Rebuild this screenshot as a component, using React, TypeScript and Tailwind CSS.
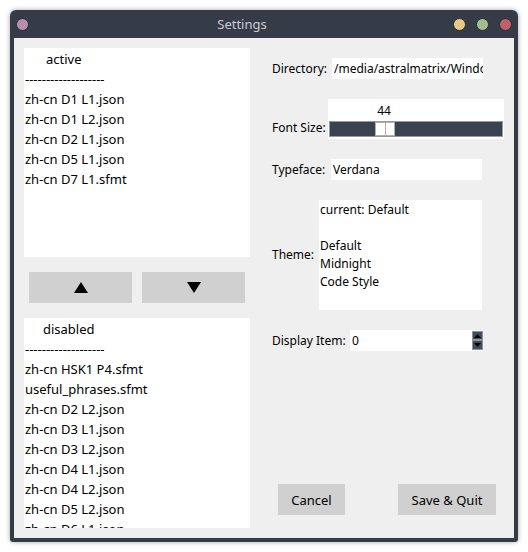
import React from "react";

const font = { fontFamily: '"Noto Sans", "Open Sans", sans-serif' };

const activeItems = [
  "zh-cn D1 L1.json",
  "zh-cn D1 L2.json",
  "zh-cn D2 L1.json",
  "zh-cn D5 L1.json",
  "zh-cn D7 L1.sfmt",
];

const disabledItems = [
  "zh-cn HSK1 P4.sfmt",
  "useful_phrases.sfmt",
  "zh-cn D2 L2.json",
  "zh-cn D3 L1.json",
  "zh-cn D3 L2.json",
  "zh-cn D4 L1.json",
  "zh-cn D4 L2.json",
  "zh-cn D5 L2.json",
  "zh-cn D6 L1.json",
];

const Dot = ({ c }: { c: string }) => (
  <div className={`w-[13px] h-[13px] rounded-full border border-[#2a2e38] ${c}`} />
);

export default function App() {
  return (
    <div className="w-[528px] h-[552px] bg-white pt-[10px] pl-[10px] text-[13px] text-black" style={font}>
      <div className="w-[508px] h-[532px] flex flex-col rounded-t-[6px] rounded-b-[3px] bg-[#363b48] shadow-[0_0_5px_rgba(0,0,0,0.35)] overflow-hidden">
        <div className="h-[28px] flex items-center pl-[6px] pr-[6px]">
          <Dot c="bg-[#b88dae]" />
          <div className="flex-1 text-center text-[#c9ccd3] text-[13px] leading-none pl-[2px]">Settings</div>
          <div className="flex items-center gap-[10px]">
            <Dot c="bg-[#e8c985]" />
            <Dot c="bg-[#a3be8c]" />
            <Dot c="bg-[#c0616a]" />
          </div>
        </div>
        <div className="flex-1 mx-[4px] mb-[4px] bg-[#efefef] flex p-[10px] pr-0">
          {/* left column */}
          <div className="w-[226px] shrink-0 flex flex-col">
            <div className="h-[209px] bg-white pt-[1px] pl-[1px] leading-[20px] overflow-hidden whitespace-nowrap">
              <div className="pl-[21px]">active</div>
              <div>-------------------</div>
              {activeItems.map((t) => (
                <div key={t}>{t}</div>
              ))}
            </div>
            <div className="flex gap-[10px] px-[5px] mt-[15px]">
              <button className="w-[103px] h-[31px] bg-[#d0d0d0] flex items-center justify-center">
                <svg width="14" height="11" viewBox="0 0 14 11"><path d="M0 11 L7 0 L14 11 Z" fill="#000" /></svg>
              </button>
              <button className="w-[103px] h-[31px] bg-[#d0d0d0] flex items-center justify-center">
                <svg width="14" height="11" viewBox="0 0 14 11"><path d="M0 0 L7 11 L14 0 Z" fill="#000" /></svg>
              </button>
            </div>
            <div className="h-[210px] mt-[15px] bg-white pt-[1px] pl-[1px] leading-[20px] overflow-hidden whitespace-nowrap">
              <div className="pl-[18px]">disabled</div>
              <div>-------------------</div>
              {disabledItems.map((t) => (
                <div key={t}>{t}</div>
              ))}
            </div>
          </div>
          {/* right column */}
          <div className="ml-[22px] flex-1 flex flex-col pt-[10px] whitespace-nowrap text-[12px]">
            <div className="flex items-center h-[21px]">
              <div className="w-[60px] shrink-0">Directory:</div>
              <div className="w-[151px] shrink-0 h-[21px] bg-white pl-[2px] leading-[21px] overflow-hidden">/media/astralmatrix/Windows</div>
            </div>
            <div className="flex items-end h-[40px] mt-[20px]">
              <div className="w-[56px] shrink-0 pb-[2px]">Font Size:</div>
              <div className="w-[176px] shrink-0 h-[40px] bg-white flex flex-col">
                <div className="h-[22px] relative">
                  <span className="absolute left-[48px] top-[3px] w-[16px] text-center leading-[18px]">44</span>
                </div>
                <div className="mx-[1px] h-[16px] border border-[#9a9a9a] bg-[#3b4252] relative">
                  <div className="absolute left-[45px] top-0 w-[20px] h-[14px] bg-white border border-[#b0b0b0] flex">
                    <div className="flex-1 border-r border-[#b0b0b0]" />
                    <div className="flex-1" />
                  </div>
                </div>
              </div>
            </div>
            <div className="flex items-center h-[21px] mt-[20px]">
              <div className="w-[59px] shrink-0">Typeface:</div>
              <div className="w-[151px] shrink-0 h-[21px] bg-white pl-[2px] leading-[21px]">Verdana</div>
            </div>
            <div className="flex items-center h-[110px] mt-[20px]">
              <div className="w-[47px] shrink-0">Theme:</div>
              <div className="w-[163px] shrink-0 h-[110px] bg-white pl-[1px] pt-[1px] leading-[18px]">
                <div>current: Default</div>
                <div>&nbsp;</div>
                <div>Default</div>
                <div>Midnight</div>
                <div>Code Style</div>
              </div>
            </div>
            <div className="flex items-center h-[21px] mt-[20px]">
              <div className="w-[78px] shrink-0">Display Item:</div>
              <div className="w-[133px] shrink-0 h-[21px] bg-white pl-[2px] leading-[21px] flex">
                <div className="flex-1">0</div>
                <div className="w-[11px] flex flex-col py-[1px]">
                  <div className="h-[9px] bg-[#454b5a] border border-[#8d929c] flex items-center justify-center">
                    <svg width="7" height="4" viewBox="0 0 7 4"><path d="M0 4 L3.5 0 L7 4 Z" fill="#000" /></svg>
                  </div>
                  <div className="h-[10px] bg-[#454b5a] border border-[#8d929c] flex items-center justify-center">
                    <svg width="7" height="4" viewBox="0 0 7 4"><path d="M0 0 L3.5 4 L7 0 Z" fill="#000" /></svg>
                  </div>
                </div>
              </div>
            </div>
            <div className="mt-auto mb-[13px] flex pl-[6px] text-[13px]">
              <button className="w-[67px] h-[31px] pt-[2px] bg-[#d0d0d0] flex items-center justify-center">Cancel</button>
              <button className="ml-[53px] w-[98px] h-[31px] pt-[2px] bg-[#d0d0d0] flex items-center justify-center">Save &amp; Quit</button>
            </div>
          </div>
        </div>
      </div>
    </div>
  );
}
